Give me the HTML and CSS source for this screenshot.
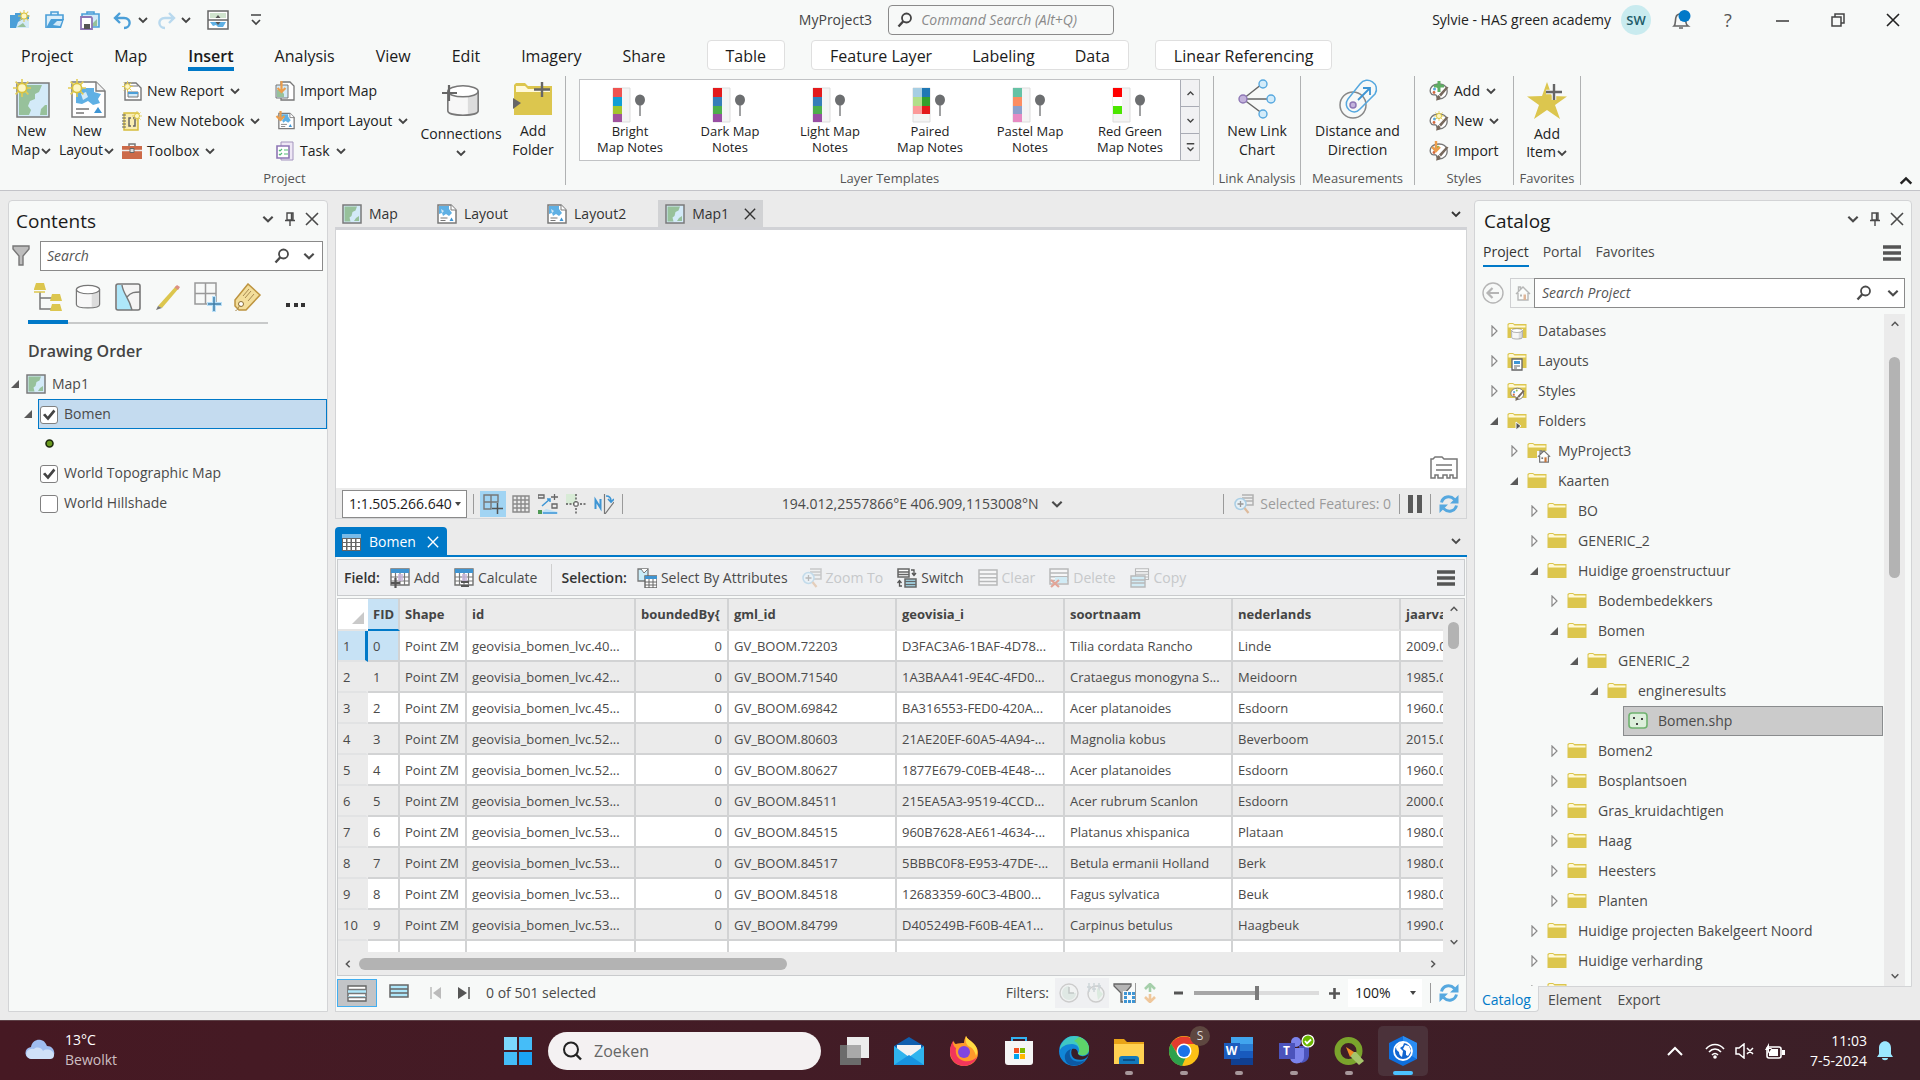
FILE: index.html
```html
<!DOCTYPE html>
<html lang="en">
<head>
<meta charset="utf-8">
<title>MyProject3</title>
<link rel="stylesheet" href="styles.css">
</head>
<body>
<svg class="sprite" aria-hidden="true">
  <symbol id="chev" viewBox="0 0 12 12"><path d="M2 4l4 4 4-4" fill="none" stroke="currentColor" stroke-width="1.8"/></symbol>
  <symbol id="chevup" viewBox="0 0 12 12"><path d="M2 8l4-4 4 4" fill="none" stroke="currentColor" stroke-width="1.8"/></symbol>
  <symbol id="more" viewBox="0 0 12 14"><path d="M1 2h10M2 7l4 4 4-4" fill="none" stroke="currentColor" stroke-width="1.7"/></symbol>
  <symbol id="close" viewBox="0 0 14 14"><path d="M1 1l12 12M13 1L1 13" fill="none" stroke="currentColor" stroke-width="1.6"/></symbol>
  <symbol id="pin" viewBox="0 0 14 14"><path d="M4 1h6v7H4zM8.500 1v7M2 8.500h10M7 9v5" fill="none" stroke="currentColor" stroke-width="1.400"/></symbol>
  <symbol id="mag" viewBox="0 0 16 16"><circle cx="9.500" cy="6" r="4.500" fill="none" stroke="currentColor" stroke-width="1.800"/><path d="M6.300 9.200L1.500 14.500" stroke="currentColor" stroke-width="2.400"/></symbol>
  <symbol id="menu" viewBox="0 0 18 16"><path d="M0 2h18M0 8h18M0 14h18" stroke="#555" stroke-width="3.600"/></symbol>
  <symbol id="sun" viewBox="0 0 18 18"><path d="M9 0v18M0 9h18M2.600 2.600l12.800 12.800M15.400 2.600L2.600 15.400" stroke="#e3cc55" stroke-width="1.600"/><circle cx="9" cy="9" r="4.600" fill="#fdf6c4" stroke="#d9c23c" stroke-width="1.600"/></symbol>
  <symbol id="map" viewBox="0 0 20 20"><path d="M1 1h18v18H1z" fill="#d3eaf8" stroke="#7a7a7a" stroke-width="1.500"/><path d="M2.500 2.500H15l-1.500 4-3 1.500-1 4-2 1.500 1 4h-6zM14 14l3-2v5h-5z" fill="#97c19b"/></symbol>
  <symbol id="layout" viewBox="0 0 20 20"><path d="M1 1h13l5 5v13H1z" fill="#fff" stroke="#7a7a7a" stroke-width="1.500"/><path d="M14 1v5h5" fill="#fff" stroke="#7a7a7a"/><path d="M2 2h10v3l3 4-3 3-3-2-3 2-1-3-3 1z" fill="#5fb0e4"/><path d="M4 5l3 2-2 2z" fill="#d3eaf8"/><path d="M3.500 14h7M3.500 16.500h5" stroke="#777"/><path d="M12.500 17l2-3.500 2 3.500z" fill="#3e95d4"/></symbol>
  <symbol id="refresh" viewBox="0 0 20 20"><path d="M2.500 8.500C4 2.500 11 1 15.500 5.500M17.500 11.500C16 17.500 9 19 4.500 14.500" fill="none" stroke="#56a8df" stroke-width="3"/><path d="M19.500 1v8.500H11zM.5 19v-8.500H9z" fill="#56a8df"/></symbol>
  <symbol id="folder" viewBox="0 0 20 20"><path d="M.5 17V3l1.500-1h4l1.500 1H19.500v14z" fill="#dcc64e"/><path d="M1.500 5.500V4l1-1h3.500L7.500 4.500h11v2H1.500z" fill="#fff9d8"/></symbol>
  <symbol id="open" viewBox="0 0 10 10"><path d="M9 1v8H1z" fill="#5a5a5a"/></symbol>
  <symbol id="shut" viewBox="0 0 10 12"><path d="M3 1v10l5-5z" fill="#fff" stroke="#8a8a8a" stroke-width="1.200"/></symbol>
  <symbol id="cyl" viewBox="0 0 28 28"><path d="M1 6v16c0 5 26 5 26 0V6" fill="#f7f7f7"/><path d="M18 10v16c6-.5 9-2 9-4V6c0 2-3 3.500-9 4z" fill="#dcdcdc"/><ellipse cx="14" cy="6" rx="12.500" ry="4.500" fill="#fff"/><path d="M1.500 6v16c0 5 25 5 25 0V6" fill="none" stroke="#777" stroke-width="1.300"/><ellipse cx="14" cy="6" rx="12.500" ry="4.500" fill="none" stroke="#777" stroke-width="1.300"/></symbol>
  <symbol id="tbl" viewBox="0 0 20 18"><path d="M1 1h18v16H1z" fill="#fff" stroke="#707070" stroke-width="1.400"/><path d="M1 1h18v4H1z" fill="#3f94d1"/><path d="M1 9h18M1 13h18M5.500 5v12M10 5v12M14.500 5v12" stroke="#777" stroke-width="1.200"/><path d="M8 6h5v7H8z" fill="#c9b6dc" opacity=".8"/></symbol>
  <symbol id="rows" viewBox="0 0 20 18"><path d="M1 1h18v15H1z" fill="#fff" stroke="#777" stroke-width="1.500"/><path d="M1 5h18M1 8.700h18M1 12.400h18" stroke="#777" stroke-width="1.500"/></symbol>
  <symbol id="palette" viewBox="0 0 20 20"><path d="M10 3C4 3 0 7 1.500 11.500c1.500 4 4 1.500 5.500 2.500 1.500 1.500 0 4 3 4 5 0 9-4 8-9-.700-4-4-6-8-6z" fill="#fff" stroke="#777" stroke-width="1.300"/><circle cx="5.500" cy="8" r="1.500" fill="#5aabdf"/><circle cx="9" cy="6" r="1.300" fill="#8fb94c"/><circle cx="5" cy="11.500" r="1.400" fill="#d4693f"/><path d="M19.500 6.500l-2-1-7.500 8 2 2zM9.500 14l2 2c0 2.500-2.500 3.500-4.500 3.500 1-2 0-4 2.500-5.500z" fill="#77695e"/></symbol>
  <symbol id="house" viewBox="0 0 16 16"><path d="M3 8v7h10V8M1 9l7-7 7 7M3.500 6V2h2v2" fill="#fff" stroke="#777" stroke-width="1.400"/><path d="M8.500 9.500H11V15H8.500z" fill="#c8763c"/><path d="M5 9.500h2v2H5z" fill="#777"/></symbol>
  <symbol id="notepin" viewBox="0 0 12 24"><ellipse cx="6" cy="6" rx="5" ry="5.500" fill="#6c6e70"/><path d="M6 10v12" stroke="#6c6e70" stroke-width="1.300"/></symbol>
  <symbol id="magplus" viewBox="0 0 20 20"><path d="M8 1h11v10h-8M8 4h11M10 7h9" fill="#eee" stroke="#999" stroke-width="1.500"/><circle cx="6.500" cy="10" r="5.500" fill="#e4f3fb" stroke="#8fc3e3" stroke-width="1.500"/><path d="M3.500 10h6M6.500 7v6" stroke="#777" stroke-width="1.300"/><path d="M10.500 14l4 5" stroke="#d8a67a" stroke-width="2.200"/></symbol>
</svg>

<header class="titlebar">
  <div class="quick">
    <button class="ib" aria-label="New project"><svg width="20" height="20" viewBox="0 0 20 20"><path d="M0 5h5V3h7v2h7v13H0z" fill="#4b9fd8"/><path d="M6 18l2-6 5-3h6v9z" fill="#d3eaf8"/><path d="M7 17l6-4 3 4z" fill="#97c19b"/><use href="#sun" x="8" y="0" width="12" height="12"/></svg></button>
    <button class="ib" aria-label="Open project"><svg width="20" height="20" viewBox="0 0 20 20"><path d="M1 18V5h17v5M6 5V2h7v3" fill="#dceffa" stroke="#4b9fd8" stroke-width="1.600"/><path d="M1 18L6 9h13l-3 9z" fill="#4b9fd8"/><path d="M8 15l4-4h5l-2 5z" fill="#d3eaf8"/></svg></button>
    <button class="ib" aria-label="Save project"><svg width="20" height="20" viewBox="0 0 20 20"><path d="M2 17V4h17v13zM7 4V2h7v2" fill="#d3eaf8" stroke="#4b9fd8" stroke-width="1.600"/><path d="M12 14l5-5v7h-5z" fill="#97c19b"/><path d="M1 7h10l1 1v11H1z" fill="#fff" stroke="#8e77b5" stroke-width="1.800"/><path d="M4 14h6v5H4z" fill="#555"/></svg></button>
    <button class="ib undo" aria-label="Undo"><svg width="20" height="20" viewBox="0 0 20 20"><path d="M7 3L2 8l5 5M2.500 8H11c8 0 7 10 0 10" fill="none" stroke="#4b9fd8" stroke-width="2.400"/></svg><svg class="i12"><use href="#chev"/></svg></button>
    <button class="ib undo" aria-label="Redo"><svg width="20" height="20" viewBox="0 0 20 20"><path d="M13 3l5 5-5 5M17.500 8H9C1 8 2 18 9 18" fill="none" stroke="#b9d9ee" stroke-width="2.400"/></svg><svg class="i12"><use href="#chev"/></svg></button>
    <button class="ib" aria-label="Switch view"><svg width="22" height="20" viewBox="0 0 22 20"><path d="M1 1h20v18H1z" fill="#fff" stroke="#666" stroke-width="1.500"/><path d="M3 3h16v5H3z" fill="#cfe3cd"/><path d="M3 12h16l-3 5h-5l-2-2-3 1z" fill="#5fb0e4"/><path d="M1 10h20" stroke="#666" stroke-width="1.500"/><path d="M8.500 8L11 5l2.500 3zM8.500 12l2.500 3 2.500-3z" fill="#555"/></svg></button>
    <button class="ib" aria-label="Customize"><svg width="12" height="14"><use href="#more"/></svg></button>
  </div>
  <div class="project">
    <span>MyProject3</span>
    <label class="cmd"><svg width="16" height="16"><use href="#mag"/></svg><input type="text" aria-label="Command Search" placeholder="Command Search (Alt+Q)"></label>
  </div>
  <div class="user">
    <span>Sylvie - HAS green academy</span>
    <span class="avatar">SW</span>
    <button class="ib" aria-label="Notifications"><svg width="22" height="22" viewBox="0 0 22 22"><path d="M4 17c2-2 1-6 2-9 1-4 8-4 9 0 1 3 0 7 3 9zM9 19h4" fill="none" stroke="#666" stroke-width="1.600"/><circle cx="14.500" cy="7" r="6" fill="#0079c8"/></svg></button>
    <button class="ib help" aria-label="Help">?</button>
    <button class="ib" aria-label="Minimize"><svg width="14" height="14"><path d="M0 8h13" stroke="#444" stroke-width="1.600"/></svg></button>
    <button class="ib" aria-label="Restore"><svg width="14" height="14" viewBox="0 0 14 14"><path d="M1 4h9v9H1zM4 4V1h9v9h-3" fill="none" stroke="#444" stroke-width="1.500"/></svg></button>
    <button class="ib" aria-label="Close"><svg width="14" height="14"><use href="#close"/></svg></button>
  </div>
</header>

<nav class="tabs">
  <a href="#">Project</a><a href="#">Map</a><a href="#" class="on">Insert</a><a href="#">Analysis</a><a href="#">View</a><a href="#">Edit</a><a href="#">Imagery</a><a href="#">Share</a>
  <span class="ctx"><a href="#">Table</a></span>
  <span class="ctx"><a href="#">Feature Layer</a><a href="#">Labeling</a><a href="#">Data</a></span>
  <span class="ctx"><a href="#">Linear Referencing</a></span>
</nav>

<section class="ribbon">
  <div class="group g-project">
    <div class="gbody">
      <button class="big"><svg width="38" height="40" viewBox="0 0 38 40"><path d="M4 4h32v34H4z" fill="#d3eaf8" stroke="#7a7a7a" stroke-width="1.500"/><path d="M6 6h23l-3 7-4 2v5l-5 2-2 5 3 4-2 5H6zM28 30l4-4h2v10h-7z" fill="#97c19b"/><use href="#sun" x="0" y="0" width="18" height="18"/></svg><span>New<br>Map<svg class="i12"><use href="#chev"/></svg></span></button>
      <button class="big"><svg width="38" height="40" viewBox="0 0 38 40"><path d="M4 3h24l9 9v26H4z" fill="#fff" stroke="#7a7a7a" stroke-width="1.500"/><path d="M28 3v9h9" fill="#f2f2f2" stroke="#7a7a7a" stroke-width="1.400"/><path d="M8 9h18v4l7 2-3 5 2 4-7 2-5-4-6 3-6-1z" fill="#5fb0e4"/><path d="M13 15l5-2 2 5-5 3z" fill="#d3eaf8"/><path d="M8 30h13M8 34h8" stroke="#777" stroke-width="1.500"/><path d="M26 34l4-6 4 6z" fill="#3e95d4"/><use href="#sun" x="0" y="0" width="18" height="18"/></svg><span>New<br>Layout<svg class="i12"><use href="#chev"/></svg></span></button>
      <div class="stack">
        <button class="small"><svg width="20" height="20" viewBox="0 0 20 20"><path d="M3 2h11l5 5v12H3z" fill="#fff" stroke="#777" stroke-width="1.400"/><path d="M3 5h13M6 11h10v5H6z" fill="#d3eaf8" stroke="#777"/><path d="M6 11h10v2H6z" fill="#4b9fd8"/><use href="#sun" x="0" y="0" width="11" height="11"/></svg>New Report<svg class="i12"><use href="#chev"/></svg></button>
        <button class="small"><svg width="20" height="20" viewBox="0 0 20 20"><path d="M2 2h14v17H2z" fill="#f9edb0" stroke="#d6bd3c" stroke-width="1.500"/><path d="M0 4h4M0 7h4M0 10h4M0 13h4M0 16h4" stroke="#666"/><path d="M9 7H7v8h2M11 7h2v8h-2" fill="none" stroke="#666" stroke-width="1.500"/><use href="#sun" x="10" y="0" width="10" height="10"/></svg>New Notebook<svg class="i12"><use href="#chev"/></svg></button>
        <button class="small"><svg width="20" height="20" viewBox="0 0 20 20"><path d="M7 5V3h6v2" fill="none" stroke="#777" stroke-width="1.500"/><path d="M0 5h20v13H0z" fill="#cc6a48"/><path d="M0 9.500h20" stroke="#eee" stroke-width="1.500"/><path d="M8 7.500h4v4H8z" fill="#ddd" stroke="#666"/></svg>Toolbox<svg class="i12"><use href="#chev"/></svg></button>
      </div>
      <div class="stack">
        <button class="small"><svg width="20" height="20" viewBox="0 0 20 20"><path d="M6 1h9l4 4v14H6z" fill="#fff" stroke="#777" stroke-width="1.300"/><path d="M1 4h12v13H1z" fill="#d3eaf8" stroke="#777"/><path d="M2 9h4l3 4v3H2z" fill="#97c19b"/><path d="M6.500 0v10M2.500 7l4 4 4-4" fill="none" stroke="#ec9d4b" stroke-width="2.200"/></svg>Import Map</button>
        <button class="small"><svg width="20" height="20" viewBox="0 0 20 20"><use href="#layout" x="3" y="1" width="17" height="18"/><path d="M5.500 0v8M1.500 5l4 4 4-4" fill="none" stroke="#ec9d4b" stroke-width="2.200"/></svg>Import Layout<svg class="i12"><use href="#chev"/></svg></button>
        <button class="small"><svg width="20" height="20" viewBox="0 0 20 20"><path d="M6 1h12v18H6z" fill="#eee7f5" stroke="#a394bd"/><path d="M2 5h12v12H2z" fill="#fff" stroke="#8e77b5" stroke-width="1.600"/><path d="M4 9l1 1 2-2M9 9h4M4 13l1 1 2-2M9 13h4" fill="none" stroke="#5b7" stroke-width="1.200"/></svg>Task<svg class="i12"><use href="#chev"/></svg></button>
      </div>
      <button class="big conn"><svg width="38" height="40" viewBox="0 0 38 40"><use href="#cyl" x="4" y="5" width="34" height="34"/><path d="M7 6v16M0 14h15" stroke="#666" stroke-width="2.200"/></svg><span>Connections<br><svg class="i12"><use href="#chev"/></svg></span></button>
      <button class="big"><svg width="40" height="40" viewBox="0 0 40 40"><path d="M1 36V6l2-2h9l3 3h24v29z" fill="#dcc64e"/><path d="M3 10V7h9l3 3h22v3H3z" fill="#fff9d8"/><path d="M0 19l8 5-8 6z" fill="#666"/><path d="M29 3v15M21 10.500h16" stroke="#666" stroke-width="2.400"/></svg><span>Add<br>Folder</span></button>
    </div>
    <div class="glabel">Project</div>
  </div>
  <div class="group g-layers">
    <div class="gbody">
      <div class="gallery">
        <button class="tpl"><svg width="36" height="36" viewBox="0 0 36 36"><path d="M1 1h17v34H1z" fill="#f4f4f4" stroke="#ddd"/><path d="M1 1h9v9H1z" fill="#ef5350"/><path d="M1 10h9v9H1z" fill="#109fd4"/><path d="M1 19h9v8H1z" fill="#a3c62c"/><path d="M1 27h9v8H1z" fill="#a0529e"/><use href="#notepin" x="22" y="7" width="12" height="24"/></svg><span>Bright<br>Map Notes</span></button>
        <button class="tpl"><svg width="36" height="36" viewBox="0 0 36 36"><path d="M1 1h17v34H1z" fill="#f4f4f4" stroke="#ddd"/><path d="M1 1h9v9H1z" fill="#e41a1c"/><path d="M1 10h9v9H1z" fill="#377eb8"/><path d="M1 19h9v8H1z" fill="#4daf4a"/><path d="M1 27h9v8H1z" fill="#984ea3"/><use href="#notepin" x="22" y="7" width="12" height="24"/></svg><span>Dark Map<br>Notes</span></button>
        <button class="tpl"><svg width="36" height="36" viewBox="0 0 36 36"><path d="M1 1h17v34H1z" fill="#f4f4f4" stroke="#ddd"/><path d="M1 1h9v9H1z" fill="#e41a1c"/><path d="M1 10h9v9H1z" fill="#377eb8"/><path d="M1 19h9v8H1z" fill="#4daf4a"/><path d="M1 27h9v8H1z" fill="#984ea3"/><use href="#notepin" x="22" y="7" width="12" height="24"/></svg><span>Light Map<br>Notes</span></button>
        <button class="tpl"><svg width="36" height="36" viewBox="0 0 36 36"><path d="M1 1h17v34H1z" fill="#f4f4f4" stroke="#ddd"/><path d="M1 1h9v9H1z" fill="#a6cee3"/><path d="M10 1h8v9h-8z" fill="#1f78b4"/><path d="M1 10h9v9H1z" fill="#b2df8a"/><path d="M10 10h8v9h-8z" fill="#33a02c"/><path d="M1 19h9v8H1z" fill="#fb9a99"/><path d="M10 19h8v8h-8z" fill="#e31a1c"/><use href="#notepin" x="22" y="7" width="12" height="24"/></svg><span>Paired<br>Map Notes</span></button>
        <button class="tpl"><svg width="36" height="36" viewBox="0 0 36 36"><path d="M1 1h17v34H1z" fill="#f4f4f4" stroke="#ddd"/><path d="M1 1h9v9H1z" fill="#66c2a5"/><path d="M1 10h9v9H1z" fill="#fc8d62"/><path d="M1 19h9v8H1z" fill="#8da0cb"/><path d="M1 27h9v8H1z" fill="#e78ac3"/><use href="#notepin" x="22" y="7" width="12" height="24"/></svg><span>Pastel Map<br>Notes</span></button>
        <button class="tpl"><svg width="36" height="36" viewBox="0 0 36 36"><path d="M1 1h17v34H1z" fill="#f4f4f4" stroke="#ddd"/><path d="M1 1h9v9H1z" fill="#f00"/><path d="M1 10h9v9H1z" fill="#fff"/><path d="M1 19h9v8H1z" fill="#4ce600"/><use href="#notepin" x="22" y="7" width="12" height="24"/></svg><span>Red Green<br>Map Notes</span></button>
        <div class="gscroll"><button aria-label="Up"><svg width="9" height="9"><use href="#chevup"/></svg></button><button aria-label="Down"><svg width="9" height="9"><use href="#chev"/></svg></button><button aria-label="Expand"><svg width="9" height="11"><use href="#more"/></svg></button></div>
      </div>
    </div>
    <div class="glabel">Layer Templates</div>
  </div>
  <div class="group g-link">
    <div class="gbody"><button class="big"><svg width="40" height="40" viewBox="0 0 40 40"><path d="M6 20L25 5M6 20h29M6 20l20 15" stroke="#666" stroke-width="1.500"/><circle cx="6" cy="20" r="4" fill="#c3b3dc" stroke="#8e77b5" stroke-width="1.400"/><g fill="#d3ecfa" stroke="#56a8df" stroke-width="1.400"><circle cx="26" cy="5" r="4"/><circle cx="34" cy="20" r="4"/><circle cx="26" cy="35" r="4"/></g></svg><span>New Link<br>Chart</span></button></div>
    <div class="glabel">Link Analysis</div>
  </div>
  <div class="group g-measure">
    <div class="gbody"><button class="big"><svg width="40" height="40" viewBox="0 0 40 40"><circle cx="15" cy="26" r="13" fill="none" stroke="#888" stroke-width="1.500"/><path d="M10 20L22 5c7-9 21 0 15 10L22 30c-7 8-18-2-12-10z" fill="none" stroke="#56a8df" stroke-width="1.500"/><circle cx="15" cy="26" r="3" fill="#c3b3dc" stroke="#8e77b5" stroke-width="1.500"/><path d="M20 21L32 9M25 9h7v7" fill="none" stroke="#3e95d4" stroke-width="1.800"/></svg><span>Distance and<br>Direction</span></button></div>
    <div class="glabel">Measurements</div>
  </div>
  <div class="group g-styles">
    <div class="gbody"><div class="stack">
      <button class="small"><svg width="20" height="20" viewBox="0 0 20 20"><use href="#palette" width="20" height="20"/><path d="M10 0v11M5 5h10" stroke="#5fae63" stroke-width="3"/></svg>Add<svg class="i12"><use href="#chev"/></svg></button>
      <button class="small"><svg width="20" height="20" viewBox="0 0 20 20"><use href="#palette" width="20" height="20"/><use href="#sun" x="5" y="0" width="10" height="10"/></svg>New<svg class="i12"><use href="#chev"/></svg></button>
      <button class="small"><svg width="20" height="20" viewBox="0 0 20 20"><use href="#palette" width="20" height="20"/><path d="M7 0v10M3 6l4 4 4-4" fill="none" stroke="#ec9d4b" stroke-width="2.400"/></svg>Import</button>
    </div></div>
    <div class="glabel">Styles</div>
  </div>
  <div class="group g-fav">
    <div class="gbody"><button class="big low"><svg width="40" height="40" viewBox="0 0 40 40"><path d="M20 3l5 14 15 .5-12 8.500 5 14-13-9-13 9 5-14L0 17.500 15 17z" fill="#dcc64e"/><path d="M27 5v16M19 13h16" stroke="#f7f9f8" stroke-width="4.500"/><path d="M27 5v16M19 13h16" stroke="#666" stroke-width="2.400"/></svg><span>Add<br>Item<svg class="i12"><use href="#chev"/></svg></span></button></div>
    <div class="glabel">Favorites</div>
  </div>
  <button class="ib collapse" aria-label="Collapse ribbon"><svg width="16" height="16"><use href="#chevup"/></svg></button>
</section>

<main class="work">
  <aside class="pane">
    <div class="phead"><h2>Contents</h2><span class="ptools"><button class="ib" aria-label="Options"><svg class="i14"><use href="#chev"/></svg></button><button class="ib" aria-label="Pin"><svg class="i14"><use href="#pin"/></svg></button><button class="ib" aria-label="Close pane"><svg class="i14"><use href="#close"/></svg></button></span></div>
    <div class="searchrow">
      <svg width="18" height="22" viewBox="0 0 18 22"><path d="M1 1h16v3l-6 7v9H7v-9L1 4z" fill="#bdbdbd" stroke="#777" stroke-width="1.400"/></svg>
      <label class="search"><input type="text" aria-label="Search contents" placeholder="Search"><svg width="16" height="16"><use href="#mag"/></svg><svg class="i14"><use href="#chev"/></svg></label>
    </div>
    <div class="listby">
      <div class="modes">
        <button class="ib on" aria-label="Drawing order"><svg width="28" height="28" viewBox="0 0 28 28"><path d="M6 9v17h12M6 15h12" fill="none" stroke="#777" stroke-width="1.500"/><path d="M2 0h8l2 7H0v-1zM18 11h8l2 7H16zM18 21h8l2 7H16z" fill="#dcc64e"/><path d="M0 9h11" stroke="#dcc64e" stroke-width="1.500"/></svg></button>
        <button class="ib" aria-label="Data source"><svg width="26" height="28"><use href="#cyl"/></svg></button>
        <button class="ib" aria-label="Selection"><svg width="26" height="28" viewBox="0 0 26 28"><rect x="1" y="1" width="24" height="26" rx="2" fill="#f4f4f4"/><path d="M2 2h5c1 9 7 12 10 25H2z" fill="#aee7fa"/><path d="M7 2c1 9 7 12 10 25M12 14c4-5 8-5 13-5" fill="none" stroke="#777" stroke-width="1.400"/><rect x="1" y="1" width="24" height="26" rx="2" fill="none" stroke="#777" stroke-width="1.600"/></svg></button>
        <button class="ib" aria-label="Editing"><svg width="24" height="28" viewBox="0 0 24 28"><path d="M2 23L20 3l3 2L6 25z" fill="#dcc64e"/><path d="M0 27l2-4 4 2z" fill="#777"/><path d="M18.500 4.500L21 2l3 2-2 3z" fill="#dc9184"/></svg></button>
        <button class="ib" aria-label="Snapping"><svg width="28" height="30" viewBox="0 0 28 30"><path d="M1 1h21v21H1zM11.500 1v21M1 11.500h21" fill="none" stroke="#999" stroke-width="1.500"/><path d="M20 14v16M13 22h15" stroke="#b9e0f8" stroke-width="4"/><path d="M20 15v14M14 22h13" stroke="#3f7ea8" stroke-width="1.500"/></svg></button>
        <button class="ib" aria-label="Labeling"><svg width="28" height="28" viewBox="0 0 28 28"><path d="M1 17L14 1l12 11-14 15H5l-4-4z" fill="#f3de9b" stroke="#bd9440" stroke-width="1.500"/><circle cx="7" cy="21" r="2.500" fill="#fff" stroke="#8a6d33"/><path d="M11 15l6-7M14 18l6-7M9 13l6-7M1 28c2 0 3-3 5-6" fill="none" stroke="#a78a52"/></svg></button>
      </div>
      <button class="ib dots" aria-label="More"><svg width="20" height="6"><path d="M0 1h4v4H0zM8 1h4v4H8zM15 1h4v4h-4z" fill="#333"/></svg></button>
    </div>
    <h3>Drawing Order</h3>
    <ul class="toc">
      <li><svg class="tri"><use href="#open"/></svg><svg width="20" height="20"><use href="#map"/></svg>Map1</li>
      <li class="sub"><svg class="tri"><use href="#open"/></svg><label class="pick"><input type="checkbox" checked>Bomen</label></li>
      <li class="sym"><svg width="9" height="9"><circle cx="4.500" cy="4.500" r="3.500" fill="#6a9a1f" stroke="#1d2b0d" stroke-width="1.600"/></svg></li>
      <li class="lay"><label><input type="checkbox" checked>World Topographic Map</label></li>
      <li class="lay"><label><input type="checkbox">World Hillshade</label></li>
    </ul>
  </aside>

  <div class="center">
    <div class="docs">
      <a href="#"><svg width="20" height="20"><use href="#map"/></svg>Map</a>
      <a href="#"><svg width="20" height="20"><use href="#layout"/></svg>Layout</a>
      <a href="#"><svg width="20" height="20"><use href="#layout"/></svg>Layout2</a>
      <a href="#" class="on"><svg width="20" height="20"><use href="#map"/></svg>Map1<svg width="12" height="12"><use href="#close"/></svg></a>
      <button class="ib end" aria-label="Views"><svg class="i12"><use href="#chev"/></svg></button>
    </div>
    <div class="mapview"><svg class="poc" width="28" height="24" viewBox="0 0 28 24"><path d="M1 3h2l2-2h7l2 2h13v19h-4v-3h-3v3h-3v-3h-4v3H8v-3H5v3H1zM6 9h16M6 14h16" fill="none" stroke="#777" stroke-width="1.500"/></svg></div>
    <div class="mapbar">
      <span class="combo scale"><select aria-label="Map scale"><option>1:1.505.266.640</option></select></span>
      <i class="sep"></i>
      <button class="ib hot" aria-label="Snapping"><svg width="20" height="20" viewBox="0 0 20 20"><path d="M1 1h14v7h-7v7H1zM8 1v7M1 8h7" fill="none" stroke="#777" stroke-width="1.400"/><path d="M14.500 9v11M9 14.500h11" stroke="#555" stroke-width="1.500"/></svg></button>
      <button class="ib" aria-label="Grid"><svg width="18" height="18" viewBox="0 0 18 18"><path d="M1 1h16v16H1zM5 1v16M9 1v16M13 1v16M1 5h16M1 9h16M1 13h16" fill="none" stroke="#8a8a8a" stroke-width="1.400"/></svg></button>
      <button class="ib" aria-label="Inference"><svg width="20" height="20" viewBox="0 0 20 20"><path d="M0 1h6v3H0zM14 10h5v4h-5zM13 3h7M16.500 0v6" fill="none" stroke="#666" stroke-width="1.300"/><path d="M2 19l6-4 12 3v2H2z" fill="#bfe1f5"/><path d="M4 12l8-7M9 5h3v3" fill="none" stroke="#3e95d4" stroke-width="1.500"/><path d="M0 16h4v4H0z" fill="#4f9a55"/><path d="M5 19h14" stroke="#3e95d4" stroke-width="1.500"/></svg></button>
      <button class="ib" aria-label="Constraints"><svg width="20" height="20" viewBox="0 0 20 20"><path d="M0 0h10v10H0z" fill="#d8ebd6"/><path d="M10 0v20M0 10h20" stroke="#555" stroke-width="1.400" stroke-dasharray="2 1.500"/><path d="M8 8h4v4H8z" fill="#fff" stroke="#555"/></svg></button>
      <button class="ib" aria-label="Correction"><svg width="20" height="20" viewBox="0 0 20 20"><path d="M1.500 15V6l5 8V5" fill="none" stroke="#3e95d4" stroke-width="2"/><path d="M10.500 0v20M11 20l9-12" stroke="#777" stroke-width="1.200"/><path d="M12 2c4 0 5 2 5 5M14 5l3 3 3-3" fill="none" stroke="#3e95d4" stroke-width="1.600"/></svg></button>
      <i class="sep"></i>
      <span class="coords">194.012,2557866°E 406.909,1153008°N <svg class="i14"><use href="#chev"/></svg></span>
      <i class="sep"></i>
      <span class="selfeat"><svg width="20" height="20"><use href="#magplus"/></svg>Selected Features: 0</span>
      <i class="sep"></i>
      <button class="ib" aria-label="Pause"><svg width="14" height="18"><path d="M0 0h5v18H0zM9 0h5v18H9z" fill="#5a5a5a"/></svg></button>
      <i class="sep"></i>
      <button class="ib" aria-label="Refresh"><svg width="20" height="20"><use href="#refresh"/></svg></button>
    </div>

    <div class="tabstrip">
      <a href="#" class="ttab"><svg width="19" height="17" viewBox="0 0 19 17"><path d="M0 0h19v17H0z" fill="#666"/><path d="M1 5h3v3H1zM5.500 5h3v3h-3zM10 5h3v3h-3zM14.500 5H18v3h-3.500zM1 9h3v3H1zM5.500 9h3v3h-3zM10 9h3v3h-3zM14.500 9H18v3h-3.500zM1 13h3v3H1zM5.500 13h3v3h-3zM10 13h3v3h-3zM14.500 13H18v3h-3.500z" fill="#fff"/><path d="M0 0h19v4H0z" fill="#79bbe8"/></svg>Bomen<svg width="12" height="12"><use href="#close"/></svg></a>
      <button class="ib end" aria-label="Tables"><svg class="i12"><use href="#chev"/></svg></button>
    </div>
    <div class="tpanel">
      <div class="tbar">
        <b>Field:</b>
        <button><svg width="20" height="20" viewBox="0 0 20 20"><use href="#tbl" width="20" height="18"/><path d="M5.500 10v10M1 15h9" stroke="#555" stroke-width="2.200"/></svg>Add</button>
        <button><svg width="20" height="20" viewBox="0 0 20 20"><use href="#tbl" width="20" height="18"/><path d="M7 14h8M7 18h8" stroke="#555" stroke-width="2"/></svg>Calculate</button>
        <i class="sep"></i>
        <b>Selection:</b>
        <button><svg width="20" height="20" viewBox="0 0 20 20"><path d="M1 1h10v12H1z" fill="#c9ecf8" stroke="#777" stroke-width="1.300"/><path d="M4 1l3 4 4-4" fill="#fff" stroke="#777"/><path d="M8 8h12v12H8z" fill="#fff" stroke="#666" stroke-width="1.400"/><path d="M8 8h12v3H8z" fill="#3f94d1"/><path d="M8 14h12M8 17h12M12 11v9M16 11v9" stroke="#666"/></svg>Select By Attributes</button>
        <button disabled><svg width="20" height="20"><use href="#magplus"/></svg>Zoom To</button>
        <button><svg width="20" height="20" viewBox="0 0 20 20"><path d="M1 1h11v8H1zM1 4h11M1 6.500h11" fill="#fff" stroke="#666" stroke-width="1.500"/><path d="M8 11h11v8H8z" fill="#aee7fa"/><path d="M8 11h11v8H8zM8 13.500h11M8 16.500h11" fill="none" stroke="#666" stroke-width="1.500"/><path d="M14 2h3v5M15 5l2 2.500L19 5M5 18H2.500v-5M.5 15l2-2.500 2 2.500" fill="none" stroke="#555" stroke-width="1.300"/></svg>Switch</button>
        <button disabled><svg width="20" height="18"><use href="#rows"/></svg>Clear</button>
        <button disabled><svg width="20" height="20" viewBox="0 0 20 20"><use href="#rows" width="20" height="18"/><path d="M6 9h12v6H6z" fill="#aee7fa"/><path d="M2 12l8 7M10 12l-8 7" stroke="#d4492a" stroke-width="2.200"/></svg>Delete</button>
        <button disabled><svg width="20" height="20" viewBox="0 0 20 20"><use href="#rows" x="4" y="0" width="16" height="13"/><path d="M1 8h14v11H1z" fill="#aee7fa" stroke="#777" stroke-width="1.400"/><path d="M1 12h14M1 15h14" stroke="#777" stroke-width="1.400"/></svg>Copy</button>
        <button class="end" aria-label="Table menu"><svg width="18" height="16"><use href="#menu"/></svg></button>
      </div>
      <div class="gridbox">
        <div class="gridview">
          <table>
            <colgroup><col class="c30"><col class="c32"><col class="c67"><col class="c169"><col class="c93"><col class="c168"><col class="c168"><col class="c168"><col class="c168"><col class="c168"></colgroup>
            <thead><tr><th class="corner"><svg width="12" height="12"><path d="M12 0v12H0z" fill="#c9c9c9"/></svg></th><th class="fid">FID</th><th>Shape</th><th>id</th><th>boundedBy{</th><th>gml_id</th><th>geovisia_i</th><th>soortnaam</th><th>nederlands</th><th>jaarvanaanleg</th></tr></thead>
            <tbody>
              <tr class="cur"><th>1</th><td>0</td><td>Point ZM</td><td>geovisia_bomen_lvc.40...</td><td class="n">0</td><td>GV_BOOM.72203</td><td>D3FAC3A6-1BAF-4D78...</td><td>Tilia cordata Rancho</td><td>Linde</td><td>2009.0</td></tr>
              <tr><th>2</th><td>1</td><td>Point ZM</td><td>geovisia_bomen_lvc.42...</td><td class="n">0</td><td>GV_BOOM.71540</td><td>1A3BAA41-9E4C-4FD0...</td><td>Crataegus monogyna S...</td><td>Meidoorn</td><td>1985.0</td></tr>
              <tr><th>3</th><td>2</td><td>Point ZM</td><td>geovisia_bomen_lvc.45...</td><td class="n">0</td><td>GV_BOOM.69842</td><td>BA316553-FED0-420A...</td><td>Acer platanoides</td><td>Esdoorn</td><td>1960.0</td></tr>
              <tr><th>4</th><td>3</td><td>Point ZM</td><td>geovisia_bomen_lvc.52...</td><td class="n">0</td><td>GV_BOOM.80603</td><td>21AE20EF-60A5-4A94-...</td><td>Magnolia kobus</td><td>Beverboom</td><td>2015.0</td></tr>
              <tr><th>5</th><td>4</td><td>Point ZM</td><td>geovisia_bomen_lvc.52...</td><td class="n">0</td><td>GV_BOOM.80627</td><td>1877E679-C0EB-4E48-...</td><td>Acer platanoides</td><td>Esdoorn</td><td>1960.0</td></tr>
              <tr><th>6</th><td>5</td><td>Point ZM</td><td>geovisia_bomen_lvc.53...</td><td class="n">0</td><td>GV_BOOM.84511</td><td>215EA5A3-9519-4CCD...</td><td>Acer rubrum Scanlon</td><td>Esdoorn</td><td>2000.0</td></tr>
              <tr><th>7</th><td>6</td><td>Point ZM</td><td>geovisia_bomen_lvc.53...</td><td class="n">0</td><td>GV_BOOM.84515</td><td>960B7628-AE61-4634-...</td><td>Platanus xhispanica</td><td>Plataan</td><td>1980.0</td></tr>
              <tr><th>8</th><td>7</td><td>Point ZM</td><td>geovisia_bomen_lvc.53...</td><td class="n">0</td><td>GV_BOOM.84517</td><td>5BBBC0F8-E953-47DE-...</td><td>Betula ermanii Holland</td><td>Berk</td><td>1980.0</td></tr>
              <tr><th>9</th><td>8</td><td>Point ZM</td><td>geovisia_bomen_lvc.53...</td><td class="n">0</td><td>GV_BOOM.84518</td><td>12683359-60C3-4B00...</td><td>Fagus sylvatica</td><td>Beuk</td><td>1980.0</td></tr>
              <tr><th>10</th><td>9</td><td>Point ZM</td><td>geovisia_bomen_lvc.53...</td><td class="n">0</td><td>GV_BOOM.84799</td><td>D405249B-F60B-4EA1...</td><td>Carpinus betulus</td><td>Haagbeuk</td><td>1990.0</td></tr>
              <tr><th></th><td></td><td></td><td></td><td></td><td></td><td></td><td></td><td></td><td></td></tr>
            </tbody>
          </table>
        </div>
        <div class="vbar"><svg width="10" height="10"><use href="#chevup"/></svg><i></i><svg class="last" width="10" height="10"><use href="#chev"/></svg></div>
        <div class="hbar"><svg width="10" height="10" viewBox="0 0 12 12"><path d="M8 2L4 6l4 4" fill="none" stroke="currentColor" stroke-width="1.800"/></svg><i></i><svg class="last" width="10" height="10" viewBox="0 0 12 12"><path d="M4 2l4 4-4 4" fill="none" stroke="currentColor" stroke-width="1.800"/></svg></div>
      </div>
      <div class="tfoot">
        <button class="ib all" aria-label="Show all"><svg width="20" height="17" viewBox="0 0 20 17"><path d="M1 1h18v15H1z" fill="#fff" stroke="#666" stroke-width="1.400"/><path d="M1 5h18v3H1zM1 11h18v2H1z" fill="#aee7fa"/><path d="M1 4.500h18M1 8.500h18M1 12.500h18" stroke="#777" stroke-width="1.400"/></svg></button>
        <button class="ib only" aria-label="Show selected"><svg width="20" height="15" viewBox="0 0 20 15"><path d="M1 1h18v12H1zM1 5h18M1 9h18" fill="#aee7fa" stroke="#666" stroke-width="1.500"/></svg></button>
        <button class="ib" aria-label="First"><svg width="12" height="12"><path d="M1 0v12" stroke="#bbb" stroke-width="1.500"/><path d="M11 0v12L3 6z" fill="#bbb"/></svg></button>
        <button class="ib" aria-label="Last"><svg width="12" height="12"><path d="M11 0v12" stroke="#555" stroke-width="1.500"/><path d="M0 0v12l9-6z" fill="#555"/></svg></button>
        <span>0 of 501 selected</span>
        <span class="filters">Filters:</span>
        <span class="dim"><svg width="20" height="20" viewBox="0 0 20 20"><circle cx="10" cy="10" r="9" fill="#f0f2f2" stroke="#ccc" stroke-width="1.400"/><path d="M10 10V3a7 7 0 1 0 7 7z" fill="#dfe8e4"/><path d="M10 4v6h5" fill="none" stroke="#c2c8c6" stroke-width="1.500"/></svg><svg width="20" height="20" viewBox="0 0 20 20"><circle cx="11" cy="11" r="8" fill="#f0f2f2" stroke="#ccc" stroke-width="1.400"/><path d="M4 0v9M9 0v9M14 0v9M2 4h4M7 6h4M12 3h4" stroke="#ccd4d8" stroke-width="1.400"/><path d="M12 11V5l6 6-5 6z" fill="#dcebe0"/></svg></span>
        <button class="ib" aria-label="Filter by extent"><svg width="22" height="20" viewBox="0 0 22 20"><path d="M1 1h17v2l-6 7v9H8v-9L1 3z" fill="#b5b5b5" stroke="#666" stroke-width="1.300"/><path d="M10 8h12v12H10z" fill="#f7f9f8"/><path d="M11 9h3v3h-3zM15 9h3v3h-3zM19 9h3v3h-3zM11 13h3v3h-3zM19 13h3v3h-3zM11 17h3v3h-3zM15 17h3v3h-3zM19 17h3v3h-3z" fill="#3e95d4"/></svg></button>
        <i class="sep tight"></i>
        <svg width="12" height="20" viewBox="0 0 12 20"><path d="M6 2v7M1 6l5-5 5 5" fill="none" stroke="#a5cfaa" stroke-width="2.600"/><path d="M6 11v7M1 14l5 5 5-5" fill="none" stroke="#efc79b" stroke-width="2.600"/></svg>
        <button class="ib zoomout" aria-label="Zoom out"><svg width="10" height="10"><path d="M0 5h9" stroke="#555" stroke-width="3"/></svg></button>
        <input type="range" min="0" max="100" value="50" aria-label="Zoom">
        <button class="ib" aria-label="Zoom in"><svg width="11" height="11"><path d="M0 5.500h11M5.500 0v11" stroke="#555" stroke-width="2.600"/></svg></button>
        <span class="combo pct"><select aria-label="Zoom level"><option>100%</option></select></span>
        <i class="sep"></i>
        <button class="ib" aria-label="Reload table"><svg width="20" height="20"><use href="#refresh"/></svg></button>
      </div>
    </div>
  </div>

  <aside class="catalog">
    <div class="pane cpane">
      <div class="phead"><h2>Catalog</h2><span class="ptools"><button class="ib" aria-label="Options"><svg class="i14"><use href="#chev"/></svg></button><button class="ib" aria-label="Pin"><svg class="i14"><use href="#pin"/></svg></button><button class="ib" aria-label="Close pane"><svg class="i14"><use href="#close"/></svg></button></span></div>
      <div class="ctabs"><a href="#" class="on">Project</a><a href="#">Portal</a><a href="#">Favorites</a><button class="ib end" aria-label="Menu"><svg width="18" height="16"><use href="#menu"/></svg></button></div>
      <div class="csearch">
        <button class="ib" aria-label="Back"><svg width="22" height="22" viewBox="0 0 22 22"><circle cx="11" cy="11" r="10" fill="none" stroke="#b5b5b5" stroke-width="1.400"/><path d="M17 11H6M10.500 6L5.500 11l5 5" fill="none" stroke="#b5b5b5" stroke-width="2.200"/></svg></button>
        <span class="home"><svg width="16" height="16"><use href="#house"/></svg></span>
        <label class="search"><input type="text" aria-label="Search project" placeholder="Search Project"><svg width="16" height="16"><use href="#mag"/></svg><svg class="i14"><use href="#chev"/></svg></label>
      </div>
      <div class="treebox">
        <ul class="tree">
          <li class="l0"><svg class="tri"><use href="#shut"/></svg><svg width="20" height="20" viewBox="0 0 20 20"><use href="#folder" width="20" height="20"/><path d="M4 8h12v11H4z" fill="#f7f9f8"/><use href="#cyl" x="4" y="7" width="12" height="12"/></svg>Databases</li>
          <li class="l0"><svg class="tri"><use href="#shut"/></svg><svg width="20" height="20" viewBox="0 0 20 20"><use href="#folder" width="20" height="20"/><path d="M5 8h10v11H5z" fill="#fff" stroke="#666" stroke-width="1.300"/><path d="M7 10h6v3H7z" fill="#3e95d4"/><path d="M7 15h6M7 17h3" stroke="#666"/></svg>Layouts</li>
          <li class="l0"><svg class="tri"><use href="#shut"/></svg><svg width="20" height="20" viewBox="0 0 20 20"><use href="#folder" width="20" height="20"/><use href="#palette" x="3" y="5" width="15" height="15"/></svg>Styles</li>
          <li class="l0"><svg class="tri"><use href="#open"/></svg><svg width="20" height="20" viewBox="0 0 20 20"><use href="#folder" width="20" height="20"/><path d="M9 11l5 4-5 4z" fill="#555" stroke="#f7f9f8"/></svg>Folders</li>
          <li class="l1"><svg class="tri"><use href="#shut"/></svg><svg class="over" width="20" height="20" viewBox="0 0 20 20"><use href="#folder" width="20" height="20"/><path d="M10 10h14v12H10z" fill="#f7f9f8"/><use href="#house" x="10" y="8" width="14" height="14"/></svg>MyProject3</li>
          <li class="l1"><svg class="tri"><use href="#open"/></svg><svg class="i20"><use href="#folder"/></svg>Kaarten</li>
          <li class="l2"><svg class="tri"><use href="#shut"/></svg><svg class="i20"><use href="#folder"/></svg>BO</li>
          <li class="l2"><svg class="tri"><use href="#shut"/></svg><svg class="i20"><use href="#folder"/></svg>GENERIC_2</li>
          <li class="l2"><svg class="tri"><use href="#open"/></svg><svg class="i20"><use href="#folder"/></svg>Huidige groenstructuur</li>
          <li class="l3"><svg class="tri"><use href="#shut"/></svg><svg class="i20"><use href="#folder"/></svg>Bodembedekkers</li>
          <li class="l3"><svg class="tri"><use href="#open"/></svg><svg class="i20"><use href="#folder"/></svg>Bomen</li>
          <li class="l4"><svg class="tri"><use href="#open"/></svg><svg class="i20"><use href="#folder"/></svg>GENERIC_2</li>
          <li class="l5"><svg class="tri"><use href="#open"/></svg><svg class="i20"><use href="#folder"/></svg>engineresults</li>
          <li class="l6"><span class="chosen"><svg width="20" height="20" viewBox="0 0 20 20"><rect x="1" y="2" width="18" height="15" rx="3" fill="#ddefdc" stroke="#6fb26f" stroke-width="1.600"/><path d="M5 6h2v2H5zM13 7h2v2h-2zM8 12h2v2H8z" fill="#444"/></svg>Bomen.shp</span></li>
          <li class="l3"><svg class="tri"><use href="#shut"/></svg><svg class="i20"><use href="#folder"/></svg>Bomen2</li>
          <li class="l3"><svg class="tri"><use href="#shut"/></svg><svg class="i20"><use href="#folder"/></svg>Bosplantsoen</li>
          <li class="l3"><svg class="tri"><use href="#shut"/></svg><svg class="i20"><use href="#folder"/></svg>Gras_kruidachtigen</li>
          <li class="l3"><svg class="tri"><use href="#shut"/></svg><svg class="i20"><use href="#folder"/></svg>Haag</li>
          <li class="l3"><svg class="tri"><use href="#shut"/></svg><svg class="i20"><use href="#folder"/></svg>Heesters</li>
          <li class="l3"><svg class="tri"><use href="#shut"/></svg><svg class="i20"><use href="#folder"/></svg>Planten</li>
          <li class="l2"><svg class="tri"><use href="#shut"/></svg><svg class="i20"><use href="#folder"/></svg>Huidige projecten Bakelgeert Noord</li>
          <li class="l2"><svg class="tri"><use href="#shut"/></svg><svg class="i20"><use href="#folder"/></svg>Huidige verharding</li>
          <li class="l2"><svg class="tri"><use href="#shut"/></svg><svg class="i20"><use href="#folder"/></svg></li>
        </ul>
        <div class="vbar"><svg width="10" height="10"><use href="#chevup"/></svg><i></i><svg class="last" width="10" height="10"><use href="#chev"/></svg></div>
      </div>
    </div>
    <div class="btabs"><a href="#" class="on">Catalog</a><a href="#">Element</a><a href="#">Export</a></div>
  </aside>
</main>

<footer class="taskbar">
  <div class="weather"><svg width="30" height="21" viewBox="0 0 30 21"><path d="M7 20a6 6 0 0 1-1-12C7 2 12 0 16 1c4 1 5 4 6 6 9 0 10 13 1 13z" fill="#9fbdf0"/><path d="M6 20a6 5 0 1 1 3-10c3-3 8-1 9 2 3-3 11-1 11 4 0 3-2 4-4 4z" fill="#cfe0f8"/></svg><span>13°C<br><em>Bewolkt</em></span></div>
  <div class="apps">
    <button class="app" aria-label="Start"><svg width="30" height="30"><path d="M1 1h13v13H1zM16 1h13v13H16zM1 16h13v13H1zM16 16h13v13H16z" fill="#45bdf8"/><path d="M1 1h13v13H1z" fill="#7cd8fc"/><path d="M16 16h13v13H16z" fill="#1ba3f5"/></svg></button>
    <label class="find"><svg width="20" height="20" viewBox="0 0 20 20"><circle cx="9" cy="8.500" r="7" fill="none" stroke="#222" stroke-width="2"/><path d="M14 13.500l5 5" stroke="#222" stroke-width="2.400"/></svg><input type="text" aria-label="Zoeken" placeholder="Zoeken"></label>
    <button class="app" aria-label="Task view"><svg width="30" height="30"><path d="M8 1h22v21H8z" fill="#ececec"/><path d="M1 9h21v20H1z" fill="#6b6b6b"/><path d="M8 9h14v13H8z" fill="#a9a9a9"/></svg></button>
    <button class="app" aria-label="Mail"><svg width="30" height="30"><path d="M0 10L15 1l15 9v3H0z" fill="#0f5fae"/><path d="M3 9h24v12H3z" fill="#f2f2f2"/><path d="M0 10l15 11L30 10v19H0z" fill="#2fb4ee"/><path d="M15 19L0 29h30z" fill="#1793e0"/></svg></button>
    <button class="app" aria-label="Firefox"><svg width="30" height="30" viewBox="0 0 30 30"><path d="M17 0c1 3 4 4 7 7 2 2 5 5 5 10a14 13 0 0 1-28 0C1 11 3 7 5 5c0 2 1 3 2 3 2-1 6-1 8-1 0-3 1-5 2-7z" fill="#ff9a2b"/><path d="M1 15a14 14 0 0 0 27 6c-4 4-9 5-13 4C8 23 6 18 7 12 4 10 3 6 5 4c-2 2-4 6-4 11z" fill="#f2365b"/><path d="M17 0c1 3 4 4 7 7 5 5 5 9 3 13-1-4-3-8-6-9-4-2-5-6-4-11z" fill="#ffdc43"/><circle cx="15" cy="16" r="6" fill="#8045e0"/></svg></button>
    <button class="app" aria-label="Store"><svg width="30" height="30"><path d="M8 6V2h14v4" fill="none" stroke="#31b2f2" stroke-width="2"/><path d="M1 5h28v21q0 3-3 3H4q-3 0-3-3z" fill="#f5f5f5"/><path d="M10 12h5v5h-5z" fill="#f25022"/><path d="M16 12h5v5h-5z" fill="#7fba00"/><path d="M10 18h5v5h-5z" fill="#00a4ef"/><path d="M16 18h5v5h-5z" fill="#ffb900"/></svg></button>
    <button class="app" aria-label="Edge"><svg width="30" height="30" viewBox="0 0 30 30"><circle cx="15" cy="15" r="15" fill="#1186d8"/><path d="M1 11C4 3 10 0 15 0c9 0 15 6 15 12 0 7-7 9-11 6 3-6-1-10-6-10-6 0-11 3-12 6z" fill="#3fc8c4"/><path d="M20 1c6 2 10 7 10 12 0 6-6 8-11 5 2-2 3-10-4-13z" fill="#5ed36a"/><path d="M11 15c-2 9 7 13 15 9-6 9-22 7-20-5 1-3 3-5 6-6z" fill="#0c59a4"/><path d="M13 13c4-1 6 1 6 5 3 4 9 2 11-1-1 8-14 9-17 3-1-2-1-5 0-7z" fill="#3a1e27"/></svg></button>
    <button class="app run" aria-label="File Explorer"><svg width="30" height="30"><path d="M0 28V3h10l3 3h17v22z" fill="#e8a317"/><path d="M0 8h30v20H0z" fill="#ffd152"/><path d="M5 28v-5q0-3 3-3h14q3 0 3 3v5z" fill="#1279bd"/><path d="M9 24h12" stroke="#0b4f87" stroke-width="2"/></svg></button>
    <button class="app run" aria-label="Chrome"><svg class="over" width="30" height="30" viewBox="0 0 30 30"><circle cx="15" cy="15" r="15" fill="#fbc116"/><path d="M2 8A15 15 0 0 1 28 8H15l-6 10z" fill="#e33b2e"/><path d="M2 7.500L9 19l8 2-4 9A15 15 0 0 1 2 7.500z" fill="#2da14c"/><circle cx="15" cy="15" r="7.500" fill="#fff"/><circle cx="15" cy="15" r="6" fill="#1a73e8"/></svg><span class="badge">S</span></button>
    <button class="app run" aria-label="Word"><svg width="30" height="30"><path d="M7 1h22v7H7z" fill="#41a5ee"/><path d="M7 8h22v7H7z" fill="#2b7cd3"/><path d="M7 15h22v7H7z" fill="#185abd"/><path d="M7 22h22v7H7z" fill="#103f91"/><path d="M0 7h16v16H0z" fill="#1b5cbe"/></svg><span class="tee">W</span></button>
    <button class="app run" aria-label="Teams"><svg class="over" width="30" height="30" viewBox="0 0 30 30"><circle cx="17" cy="6" r="5" fill="#7b83eb"/><path d="M20 10h10v10q-1 6-8 7z" fill="#4b53bc"/><path d="M11 12h14v9c0 8-14 9-14 0z" fill="#7b83eb"/><path d="M0 7h16v16H0z" fill="#4b53bc"/><circle cx="29" cy="5" r="6" fill="#6bb700" stroke="#fff" stroke-width="1.200"/><path d="M26 5l2 2.500 4-4" fill="none" stroke="#fff" stroke-width="1.800"/></svg><span class="tee">T</span></button>
    <button class="app run" aria-label="QGIS"><svg width="30" height="30"><circle cx="14.500" cy="15" r="11" fill="none" stroke="#7aa32c" stroke-width="6"/><path d="M17 16l5 0 8 9-5 4-9-9z" fill="#a6c46b"/><path d="M12 11l8 5-4 5z" fill="#f08a24"/></svg></button>
    <button class="app run active" aria-label="ArcGIS Pro"><svg width="30" height="30"><path d="M15 0l14 7v16l-14 7-14-7V7z" fill="#0f6fdc"/><path d="M15 0l14 7v16L15 15z" fill="#2a8cf2"/><circle cx="15" cy="15" r="9" fill="#1266d0" stroke="#fff" stroke-width="1.800"/><path d="M8 11c2-4 6-5 8-4l-1 3-3 2 3 3-1 6c-2-1-3-3-3-5-2-1-3-3-3-5zM17 9l4 1 2 5-3 5-2-1v-4l-3-2z" fill="#fff"/></svg></button>
  </div>
  <div class="tray">
    <svg width="16" height="16"><path d="M1 12l7-7 7 7" fill="none" stroke="#fff" stroke-width="2"/></svg>
    <svg class="wifi" width="20" height="16" viewBox="0 0 20 16"><path d="M1 6c5-6 13-6 18 0M4 9c3.500-4 8.500-4 12 0M7 12c2-2 4-2 6 0" fill="none" stroke="#fff" stroke-width="1.600"/><circle cx="10" cy="14" r="1.800" fill="#fff"/></svg>
    <svg width="20" height="16" viewBox="0 0 20 16"><path d="M1 5h3l5-4v14l-5-4H1zM12 5l6 6M18 5l-6 6" fill="none" stroke="#fff" stroke-width="1.500"/></svg>
    <svg width="20" height="16" viewBox="0 0 20 16"><rect x="2" y="4" width="14" height="11" rx="2" fill="none" stroke="#fff" stroke-width="1.600"/><path d="M4 6h9v7H4zM17 7h3v5h-3zM4 0L0 7h3l-1 5 5-7H4z" fill="#fff"/></svg>
    <span class="clock">11:03<br>7-5-2024</span>
    <svg width="16" height="20" viewBox="0 0 16 20"><path d="M0 16l2-3V7c0-9 12-9 12 0v6l2 3zM5 17h6c0 3-6 3-6 0z" fill="#9be8ff"/></svg>
  </div>
</footer>
</body>
</html>
```
FILE: styles.css
```css
* { box-sizing: border-box; }
body {
  margin: 0;
  height: 100vh;
  display: flex;
  flex-direction: column;
  overflow: hidden;
  background: #f7f9f8;
  color: #4a4a4a;
  font: 14px/20px "Open Sans", "Noto Sans", sans-serif;
}
.sprite { position: absolute; width: 0; height: 0; }
svg { flex: none; }
button, input, select { font: inherit; color: inherit; }
button { border: 0; padding: 0; background: none; display: flex; align-items: center; justify-content: center; white-space: nowrap; }
a { color: inherit; text-decoration: none; white-space: nowrap; }
input { border: 0; padding: 0; background: none; min-width: 0; outline: 0; }
input::placeholder { color: #666; opacity: 1; }
ul { list-style: none; margin: 0; padding: 0; }
h2, h3 { margin: 0; }
.i12 { width: 12px; height: 12px; }
.i14 { width: 14px; height: 14px; }
.i20 { width: 20px; height: 20px; }
.over { overflow: visible; }
.end { margin-left: auto; }
.sep { flex: none; width: 1px; height: 20px; background: #9a9a9a; }

/* title bar */
.titlebar { flex: none; height: 40px; display: flex; align-items: center; justify-content: space-between; padding: 0 17px 0 10px; color: #444; }
.quick, .project, .user { display: flex; align-items: center; }
.quick { flex: 1; gap: 15px; }
.undo { gap: 4px; margin-right: -8px; margin-left: -2px; }
.quick .ib:nth-child(5) { margin: 0; }
.quick .ib:last-child { margin-left: 6px; }
.project { gap: 16px; }
.cmd { display: flex; align-items: center; gap: 8px; width: 226px; height: 30px; padding: 0 8px; border: 1px solid #8a8a8a; border-radius: 4px; }
.cmd input { flex: 1; font-style: italic; }
.cmd input::placeholder { color: #8a8a8a; }
.user { flex: 1; justify-content: flex-end; gap: 10px; color: #222; }
.user .ib { width: 20px; margin-left: 10px; }
.user .ib + .ib { margin-left: 25px; }
.user .ib + .help { margin-left: 17px; font-size: 18px; color: #555; }
.avatar { width: 30px; height: 30px; border-radius: 50%; background: #c9ebef; text-align: center; line-height: 30px; font-size: 13px; font-weight: 600; color: #1c5a68; }

/* ribbon tabs */
.tabs { flex: none; height: 32px; display: flex; align-items: flex-start; padding-left: 21px; font-size: 16px; line-height: 28px; color: #1b1b1b; }
.tabs > a { margin-right: 41px; padding-top: 2px; }
.tabs .on { font-weight: 600; border-bottom: 4px solid #0079c8; height: 31px; }
.ctx { display: flex; gap: 40px; height: 30px; padding: 0 18px; margin-right: 26px; border: 1px solid #dfdfdf; border-radius: 4px; background: #fff; line-height: 30px; }

/* ribbon */
.ribbon { flex: none; display: flex; align-items: stretch; height: 119px; padding: 4px 0 5px; border-bottom: 1px solid #c3c3c8; color: #222; }
.group { flex: none; display: flex; flex-direction: column; border-right: 1px solid #b0b2b3; }
.gbody { flex: 1; display: flex; }
.glabel { flex: none; text-align: center; font-size: 13px; line-height: 14px; color: #555; }
.g-project { width: 566px; padding-left: 4px; }
.g-project .gbody { display: grid; grid-template-columns: 55px 56px 153px 144px 98px 46px; }
.g-project .stack { padding-left: 7px; }
.g-layers { width: 648px; }
.g-link { width: 87px; }
.g-measure { width: 114px; }
.g-styles { width: 99px; }
.g-fav { width: 67px; }
.g-styles .stack { padding-left: 14px; }
.group > .gbody > .big:only-child { width: 100%; }
.big { flex-direction: column; justify-content: flex-start; padding-top: 3px; gap: 2px; line-height: 19px; text-align: center; align-self: start; }
.big .i12, .small .i12 { color: #444; }
.big .i12 { vertical-align: -2px; }
.conn span, .low span { margin-top: 4px; line-height: 18px; }
.small { height: 30px; gap: 5px; }
.gallery { display: flex; margin: 3px 13px 0 13px; flex: 1; height: 82px; border: 1px solid #c1c3c5; background: #fff; }
.tpl { flex: 1; flex-direction: column; font-size: 13px; line-height: 16px; padding-top: 2px; }
.gscroll { display: flex; flex-direction: column; width: 19px; border-left: 1px solid #a9abb5; background: #f1f1f3; color: #444; }
.gscroll button { flex: 1; }
.gscroll button + button { border-top: 1px solid #a9abb5; }
.collapse { margin: auto 6px 0 auto; }
.collapse svg { margin-bottom: -4px; }

/* workspace */
.work { flex: 1; min-height: 0; display: grid; grid-template-columns: 320px minmax(0, 1fr) 438px; gap: 7px; padding: 9px 8px 8px; background: #ebebeb; }
.pane { display: flex; flex-direction: column; border: 1px solid #d3d4d6; border-radius: 4px 4px 0 0; background: #f7f9f8; min-height: 0; }
.phead { flex: none; height: 38px; display: flex; align-items: center; justify-content: space-between; padding: 2px 8px 0 7px; }
.phead h2 { font-size: 19px; line-height: 24px; font-weight: 400; color: #1b1b1b; }
.ptools { display: flex; gap: 8px; padding-bottom: 4px; }
.searchrow { display: flex; align-items: center; gap: 10px; padding: 2px 4px 0 3px; }
.search { flex: 1; display: flex; align-items: center; gap: 12px; height: 30px; padding: 0 6px; border: 1px solid #8a8a8a; background: #fff; }
.search input { flex: 1; font-style: italic; }
.search input::placeholder { color: #555; }
.listby { display: flex; height: 53px; padding-left: 19px; }
.modes { display: grid; grid-template-columns: repeat(6, 40px); border-bottom: 2px solid #c8caca; }
.modes .on { border-bottom: 4px solid #0079c8; margin-bottom: -2px; padding-top: 2px; }
.dots { margin-left: 18px; padding-top: 14px; }
.pane h3 { font-size: 16px; line-height: 24px; font-weight: 600; padding: 15px 19px 6px; color: #444; }
.toc li { display: flex; align-items: center; height: 30px; padding-left: 1px; gap: 6px; }
.tri { width: 10px; height: 12px; }
.toc .sub { padding-left: 14px; gap: 5px; }
.toc label { flex: 1; display: flex; align-items: center; gap: 6px; }
.toc .pick { height: 30px; padding-left: 1px; border: 1px solid #0079c8; background: #c4dbef; }
.toc .sym { height: 29px; padding-left: 36px; }
.toc .lay { padding-left: 31px; }
input[type=checkbox] { appearance: none; flex: none; width: 18px; height: 18px; margin: 2px 0 0; border: 1px solid #808080; border-radius: 3px; background: #fff; }
input[type=checkbox]:checked::after { content: ""; display: block; width: 16px; height: 16px; background: #444; clip-path: polygon(12% 50%, 26% 40%, 42% 60%, 78% 16%, 90% 28%, 44% 84%); }

/* document tabs and map */
.center { display: flex; flex-direction: column; min-height: 0; }
.docs { flex: none; display: flex; height: 27px; color: #333; }
.docs a { display: flex; align-items: center; gap: 7px; padding: 1px 9px 0 7px; margin-right: 23px; }
.docs .on { background: #d1d2d4; padding: 1px 7px 0; }
.docs .on svg:last-child { margin-left: 8px; }
.docs .end, .tabstrip .end { margin-right: 5px; }
.mapview { position: relative; flex: 1; border: 1px solid #d3d4d6; border-top: 3px solid #d1d2d6; border-bottom: 0; background: #fff; }
.poc { position: absolute; right: 8px; bottom: 8px; }
.mapbar { flex: none; display: flex; align-items: center; gap: 8px; height: 31px; padding: 1px 7px 0 6px; border: 1px solid #d3d4d6; border-top: 0; }
.hot { width: 26px; height: 26px; margin: 0 -2px; background: #a1d4f3; }
.combo { position: relative; border: 1px solid #8a8a8a; background: #fff; color: #1b1b1b; }
.combo select { appearance: none; width: 100%; height: 26px; padding: 0 6px; border: 0; background: none; }
.combo::after { content: ""; position: absolute; right: 5px; top: 11px; border: 3px solid transparent; border-top: 4px solid #444; border-bottom: 0; }
.scale { width: 125px; height: 28px; margin-right: -2px; }
.coords { flex: 1; display: flex; align-items: center; justify-content: center; gap: 12px; padding-top: 1px; }
.selfeat { display: flex; align-items: center; gap: 6px; color: #9b9b9b; margin-left: 2px; }
.selfeat svg { opacity: .7; }

/* attribute table */
.tabstrip { flex: none; display: flex; margin-top: 8px; height: 30px; border-bottom: 2px solid #0079c8; }
.ttab { display: flex; align-items: center; gap: 8px; padding: 2px 8px 0 7px; border-radius: 4px 4px 0 0; background: #0079c8; color: #fff; }
.ttab svg:last-child { margin-left: 3px; }
.tpanel { flex: none; border: 1px solid #d3d4d6; border-top: 0; padding: 2px 1px 2px; background: #f7f9f8; }
.tbar { display: flex; align-items: center; height: 37px; padding: 0 9px 0 6px; border: 1px solid #c9cbcd; background: #eff0f2; }
.tbar b { font-weight: 600; color: #333; margin-right: 10px; }
.tbar button { gap: 4px; margin-right: 14px; }
.tbar .sep { background: #cfcfcf; height: 28px; margin-right: 9px; }
.tbar button:disabled { color: #c6c8ca; }
.tbar button:disabled svg { opacity: .45; }
.tbar .end { margin-right: 0; }
.gridbox { display: grid; grid-template-columns: minmax(0, 1fr) 21px; margin-top: 2px; border: 1px solid #c9cbcd; background: #ebebeb; color: #555; }
.gridview { height: 353px; overflow: hidden; }
.gridview table { width: 1231px; table-layout: fixed; border-collapse: separate; border-spacing: 0; font-size: 13px; color: #4a4a4a; }
.c30 { width: 30px; } .c32 { width: 32px; } .c67 { width: 67px; } .c93 { width: 93px; }
.c168 { width: 168px; } .c169 { width: 169px; }
.gridview th, .gridview td { height: 31px; padding: 0 5px; border-right: 2px solid #d2d3d4; border-bottom: 2px solid #d2d3d4; text-align: left; white-space: nowrap; overflow: hidden; }
.gridview tbody th { font-weight: 400; border-right-color: #ebebeb; border-bottom-color: #e2e3e4; }
.gridview thead th { font-weight: 700; border-bottom-color: #e4e4e4; height: 32px; color: #444; }
.gridview td { background: #fff; }
.gridview tr:nth-child(even) td { background: #ebebeb; }
.gridview .n { text-align: right; }
.gridview .corner { background: #fff; vertical-align: bottom; padding: 0 2px; text-align: right; border-right-color: #fff; }
.gridview thead .fid { background: #c7e2f5; border-bottom-color: #0079c8; padding-right: 0; }
.gridview thead th:nth-child(5) { padding-right: 0; }
.gridview .cur th { background: #c7e2f5; border-right: 3px solid #0079c8; }
.gridview .cur td:nth-child(2) { background: #c7e2f5; }
.vbar { display: flex; flex-direction: column; align-items: center; padding: 5px 0; background: #ebebeb; color: #555; }
.vbar i { width: 11px; height: 27px; margin-top: 8px; border-radius: 6px; background: #b3b3b3; }
.vbar .last { margin-top: auto; }
.hbar { grid-column: 1 / 3; display: flex; align-items: center; height: 23px; padding: 0 26px 0 5px; }
.hbar i { width: 428px; height: 12px; margin-left: 6px; border-radius: 6px; background: #b3b3b3; }
.hbar .last { margin-left: auto; }
.tfoot { display: flex; align-items: center; gap: 12px; height: 33px; padding: 1px 6px 0 0; }
.all { width: 40px; height: 28px; border: 1px solid #41aef0; background: #c2c4c7; }
.only { margin-right: 9px; padding-bottom: 4px; }
.tfoot .ib:nth-child(4) { margin: 0 4px; }
.filters { margin-left: auto; margin-right: -6px; }
.dim { display: flex; align-items: center; gap: 6px; height: 30px; padding: 0 4px; margin-right: -8px; background: #eff0f2; }
.zoomout { margin-left: 6px; }
.tfoot input[type=range] { appearance: none; width: 125px; height: 14px; margin: 0 -2px; background: linear-gradient(90deg, #a6a6a6 50%, #dcdcdc 50%) center / 100% 4px no-repeat; }
input[type=range]::-webkit-slider-thumb { appearance: none; width: 4px; height: 14px; background: #7a7a7a; }
.pct { width: 74px; height: 28px; margin: 0 -4px; border-color: #fff; }
.tfoot .sep { margin-right: -4px; }
.tfoot .tight { margin-left: -12px; }

/* catalog */
.catalog { display: flex; flex-direction: column; min-height: 0; }
.cpane { flex: 1; }
.cpane .phead { padding-left: 9px; padding-right: 7px; }
.ctabs { flex: none; display: flex; height: 28px; padding: 0 10px 0 8px; gap: 14px; line-height: 25px; }
.ctabs .on { border-bottom: 2px solid #0079c8; color: #333; }
.csearch { flex: none; display: flex; align-items: center; margin-top: 11px; padding: 0 6px 0 7px; }
.csearch .ib { margin-right: 6px; }
.csearch .search { gap: 14px; padding: 0 4px 0 7px; }
.home { width: 24px; height: 30px; display: flex; align-items: center; justify-content: center; border: 1px solid #cfd0d2; border-right: 0; }
.home svg { opacity: .5; }
.treebox { flex: 1; min-height: 0; display: grid; grid-template-columns: minmax(0, 1fr) 21px; padding: 6px 6px 0 0; overflow: hidden; }
.tree { overflow: hidden; min-height: 0; padding-top: 2px; }
.tree li { display: flex; align-items: center; height: 30px; white-space: nowrap; }
.tree li > svg + svg { margin: 0 11px 0 8px; }
.l0 { padding-left: 14px; } .l1 { padding-left: 34px; } .l2 { padding-left: 54px; }
.l3 { padding-left: 74px; } .l4 { padding-left: 94px; } .l5 { padding-left: 114px; } .l6 { padding-left: 148px; }
.chosen { flex: 1; display: flex; align-items: center; height: 30px; margin-right: 1px; border: 1px solid #8a8c8e; background: #cbcbcb; }
.chosen svg { margin: 0 10px 0 4px; }
.treebox .vbar i { height: 221px; margin-top: 28px; }
.btabs { flex: none; display: flex; height: 26px; margin-top: -1px; line-height: 27px; }
.btabs a { padding: 0 7px 0 9px; }
.btabs .on { padding: 0 7px; border: 1px solid #d3d4d6; border-top: 0; border-radius: 0 0 4px 4px; background: #f7f9f8; color: #0079c8; }

/* taskbar */
.taskbar { flex: none; height: 60px; display: grid; grid-template-columns: 1fr auto 1fr; align-items: center; border-top: 1px solid #5d4046; background: linear-gradient(90deg, #461923, #431c26 40%, #3b1f27); color: #fff; }
.weather { display: flex; align-items: center; gap: 10px; padding: 0 0 2px 25px; }
.weather em { font-style: normal; color: #cdbfc2; }
.apps { display: flex; align-items: center; padding-right: 2px; }
.app { position: relative; width: 55px; height: 50px; border-radius: 5px; }
.run::after { content: ""; position: absolute; bottom: 1px; left: 24px; width: 8px; height: 4px; border-radius: 2px; background: #a7979b; }
.active { background: #4b323a; width: 50px; margin-left: 2px; }
.active::after { left: 15px; width: 20px; background: #4cc2ff; }
.find { display: flex; align-items: center; gap: 12px; width: 273px; height: 38px; margin: 0 5px 0 3px; padding: 0 14px; border-radius: 19px; background: #f4f1f2; }
.find input { flex: 1; font-size: 16px; }
.badge { position: absolute; top: 0; right: 1px; width: 20px; height: 20px; border-radius: 50%; background: #5e4740; font-size: 12px; line-height: 20px; color: #ddd; }
.tee { position: absolute; left: 13px; top: 17px; width: 15px; text-align: center; font-size: 12px; font-weight: 700; line-height: 16px; }
.tray { display: flex; align-items: center; justify-content: flex-end; gap: 10px; padding-right: 27px; }
.wifi { margin-left: 12px; }
.clock { text-align: right; margin-left: 15px; }
```
